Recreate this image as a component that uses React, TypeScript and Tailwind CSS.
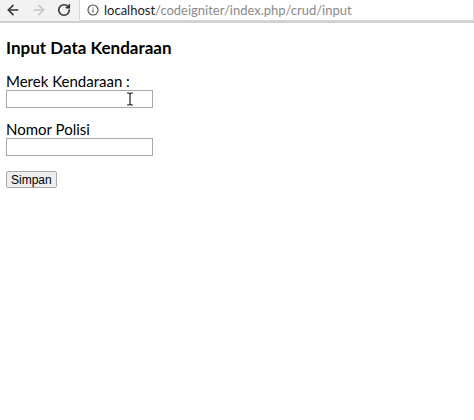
import { ArrowLeft, ArrowRight, RotateCw, Info } from "lucide-react";

const pageFont = { fontFamily: 'Lato, "Open Sans", sans-serif' };

export default function App() {
  return (
    <div className="w-[474px] h-[420px] bg-white overflow-hidden" style={pageFont}>
      {/* browser toolbar */}
      <div className="h-[23px] bg-[#f2f2f2] border-b-2 border-[#d0d0d0] flex items-start">
        <div className="flex items-center h-[20px] pl-[5px] gap-[10px]">
          <ArrowLeft className="w-[16px] h-[16px] text-[#333]" strokeWidth={2.4} />
          <ArrowRight className="w-[16px] h-[16px] text-[#c4c4c4]" strokeWidth={2.4} />
          <RotateCw className="w-[14px] h-[14px] text-[#333]" strokeWidth={2.8} />
        </div>
        <div className="ml-[8px] flex-1 h-[21px] bg-white border border-[#d6d6d6] border-t-0 rounded-bl-[2px] flex items-center pl-[7px] gap-[5px]">
          <Info className="w-[12px] h-[12px] text-[#444]" strokeWidth={2.2} />
          <span className="text-[13px] leading-none text-[#222]">
            localhost<span className="text-[#8a8a8a]">/codeigniter/index.php/crud/input</span>
          </span>
        </div>
      </div>

      {/* page */}
      <div className="px-[6px] pt-[13px]">
        <h3 className="text-[17px] font-bold text-black leading-[24px]">Input Data Kendaraan</h3>
        <form className="mt-[12px]">
          <div className="relative">
            <div className="text-[15px] leading-[18px] text-black">Merek Kendaraan :</div>
            <input className="block w-[147px] h-[18px] border border-[#a9a9a9] bg-white" />
            <svg className="absolute left-[120px] top-[20px]" width="8" height="14" viewBox="0 0 8 14">
              <path d="M1 1h2l1 1 1-1h2M4 2v10M1 13h2l1-1 1 1h2" fill="none" stroke="#fff" strokeWidth="2.6" />
              <path d="M1 1h2l1 1 1-1h2M4 2v10M1 13h2l1-1 1 1h2" fill="none" stroke="#222" strokeWidth="1.2" />
            </svg>
          </div>
          <div className="mt-[12px]">
            <div className="text-[15px] leading-[18px] text-black">Nomor Polisi</div>
            <input className="block w-[147px] h-[18px] border border-[#a9a9a9] bg-white" />
          </div>
          <button
            type="button"
            className="mt-[15px] h-[17px] px-[4px] text-[12px] leading-none text-black bg-[#eeeeee] border border-[#a9a9a9] rounded-[2px]"
            style={{ fontFamily: '"Liberation Sans", Arial, sans-serif' }}
          >
            Simpan
          </button>
        </form>
      </div>
    </div>
  );
}
